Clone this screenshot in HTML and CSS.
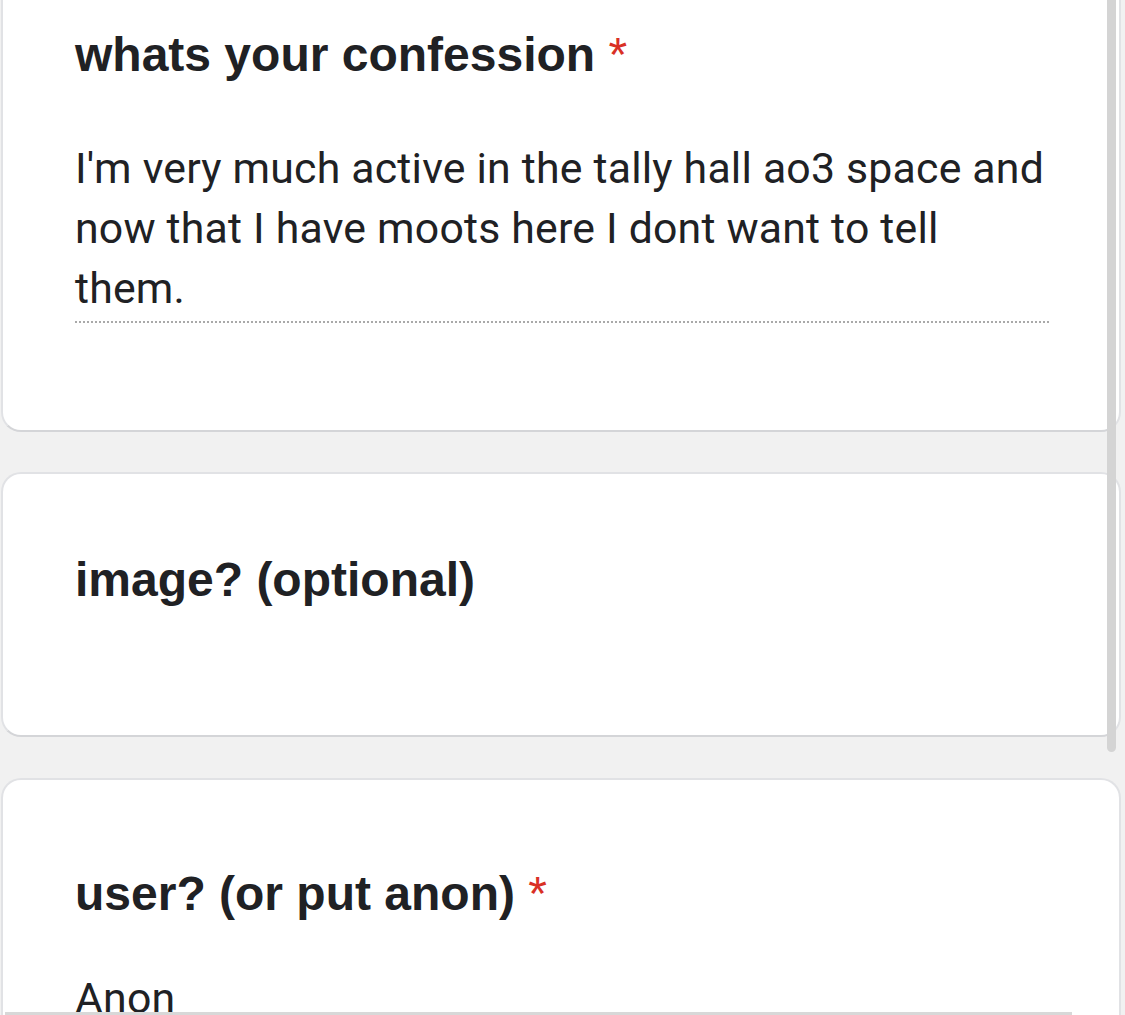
FILE: index.html
```html
<!DOCTYPE html>
<html lang="en">
<head>
<meta charset="utf-8">
<title>Form response</title>
<link rel="stylesheet" href="styles.css">
</head>
<body>
<main class="page">
  <section class="card card--clipped">
    <h2 class="question">whats your confession <span class="required">*</span></h2>
    <div class="answer answer--long">I'm very much active in the tally hall ao3 space and now that I have moots here I dont want to tell them.</div>
  </section>
  <section class="card card--image">
    <h2 class="question">image? (optional)</h2>
  </section>
  <section class="card card--user">
    <h2 class="question">user? (or put anon) <span class="required">*</span></h2>
    <div class="answer answer--short">Anon</div>
  </section>
</main>
<div class="scroll-thumb"></div>
<div class="bottom-edge"></div>
</body>
</html>
```
FILE: styles.css
```css
html, body {
  margin: 0;
  padding: 0;
  background: #f1f1f1;
  overflow: hidden;
}

.page {
  width: 1120px;
  margin-left: 1px;
  display: flex;
  flex-direction: column;
}

.card {
  background: #ffffff;
  border: 2px solid #e1e2e5;
  border-bottom-color: #d4d5d8;
  border-radius: 20px;
  padding-left: 72px;
  padding-right: 70px;
  display: flex;
  flex-direction: column;
}

.card--clipped {
  border-top: none;
  border-top-left-radius: 0;
  border-top-right-radius: 0;
  padding-top: 27px;
  padding-bottom: 107px;
}

.card--image {
  margin-top: 40px;
  padding-top: 78px;
  padding-bottom: 127px;
}

.card--user {
  margin-top: 41px;
  padding-top: 86px;
  padding-bottom: 40px;
}

.question {
  margin: 0;
  font-family: "Liberation Sans", Arial, sans-serif;
  font-weight: 700;
  font-size: 48px;
  line-height: 56px;
  color: #202124;
}

.required {
  color: #d93025;
  font-weight: 400;
}

.answer {
  font-family: Roboto, "Noto Sans", sans-serif;
  font-size: 42.8px;
  line-height: 60px;
  letter-spacing: 0.2px;
  color: #202124;
}

.answer--long {
  margin-top: 55px;
  padding-bottom: 3px;
  border-bottom: 2px dotted #a9a9a9;
}

.answer--short {
  margin-top: 46px;
}

.scroll-thumb {
  position: fixed;
  top: 0;
  left: 1107px;
  width: 9px;
  height: 752px;
  background: #d4d4d4;
  border-radius: 0 0 5px 5px;
}

.bottom-edge {
  position: fixed;
  left: 5px;
  bottom: 0;
  width: 1067px;
  height: 3px;
  background: #d8d8d8;
}
```
